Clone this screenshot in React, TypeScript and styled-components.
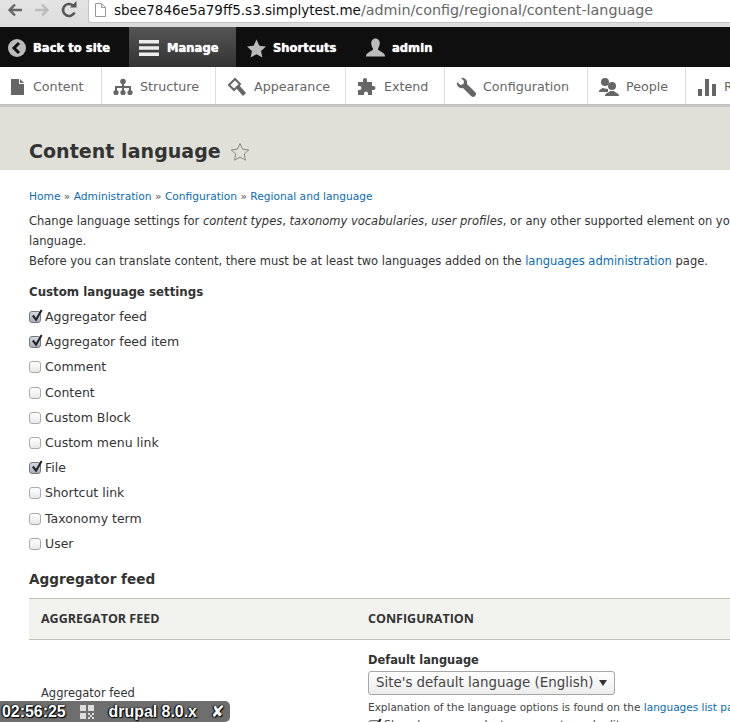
import React from "react";
import styled, { createGlobalStyle } from "styled-components";

const Global = createGlobalStyle`
  html, body { margin: 0; padding: 0; background: #fff; }
  body { width: 730px; height: 722px; overflow: hidden; position: relative; font-family: "DejaVu Sans", "Liberation Sans", sans-serif; font-size: 12px; color: #333; }
  * { box-sizing: border-box; }
`;

const Page = styled.div`width: 730px; height: 722px; overflow: hidden; display: flex; flex-direction: column;`;

const BrowserBar = styled.div`
  height: 27px; flex: none; display: flex; align-items: flex-start;
  background: linear-gradient(#e4e4e4, #dcdcdc);
  padding-left: 6px;
`;
const NavIcon = styled.svg`width: 18px; height: 18px; margin: 1px 9px 0 0; flex: none;`;
const UrlBox = styled.div`
  flex: 1; height: 23px; margin-left: 1px; background: #fff; border: 1px solid #c4c4c4; border-top: 0; border-right: 0;
  border-radius: 0 0 0 3px; display: flex; align-items: center; padding: 0 0 2px 6px; font-size: 14.3px; color: #666; white-space: nowrap;
`;
const UrlHost = styled.span`color: #111; margin-left: 8px; font-size: 13.5px;`;

const AdminBar = styled.div`height: 40px; flex: none; background: #0f0f0f; display: flex; align-items: stretch; color: #fff;`;
const BarItem = styled.div<{ $w: number; $pad?: number; $gap?: number; $active?: boolean }>`
  width: ${p => p.$w}px; flex: none; display: flex; align-items: center; gap: ${p => p.$gap ?? 7}px; padding: 2px 0 0 ${p => p.$pad ?? 8}px;
  font-weight: 700; font-size: 11.6px; color: #fff; text-shadow: 0 0 1px #fff;
  background: ${p => (p.$active ? "linear-gradient(#555, #333)" : "transparent")};
`;

const Tray = styled.div`height: 40px; flex: none; display: flex; background: #fff; border-bottom: 3px solid #c4c4c4; overflow: hidden;`;
const TrayItem = styled.div<{ $w: number }>`
  width: ${p => p.$w}px; flex: none; display: flex; align-items: center; gap: 7px; padding: 2px 0 0 11px;
  border-right: 1px solid #ddd; color: #666; font-size: 12.7px; white-space: nowrap;
`;

const Header = styled.div`height: 63px; flex: none; background: #e0e0d8; display: flex; align-items: flex-end; gap: 9px; padding: 0 0 5px 29px;`;
const Title = styled.h1`margin: 0; font-size: 19px; line-height: 28px; font-weight: 700; color: #333; letter-spacing: 0.05px;`;
const PageStar = styled.svg`flex: none; display: block; width: 20px; height: 20px; margin-bottom: 3px;`;

const Content = styled.div`padding: 20px 0 0 29px; flex: 1; position: relative; white-space: nowrap;`;
const Crumbs = styled.div`font-size: 10.65px; line-height: 14px; color: #555; margin-bottom: 7px;`;
const A = styled.span`color: #0b6bb5;`;
const Para = styled.div`font-size: 11.5px; line-height: 20px; color: #333;`;
const FieldTitle = styled.div`font-weight: 700; font-size: 11.8px; line-height: 16px; margin: 13px 0 9px;`;
const CheckRow = styled.label`height: 25.2px; display: flex; align-items: flex-start; gap: 4px; font-size: 12.5px; line-height: 16px; color: #333;`;
const Box = styled.span<{ $on?: boolean }>`
  width: 12px; height: 12px; margin-top: 2px; border-radius: 3px; flex: none; position: relative;
  border: 1px solid ${p => (p.$on ? "#777" : "#aaa")};
  background: ${p => (p.$on ? "linear-gradient(#d4d8e4,#a9afc2)" : "linear-gradient(#fff,#e8e8e8)")};
`;
const Tick = styled.svg`position: absolute; left: 0; top: -4px; width: 14px; height: 15px;`;
const Section = styled.h2`font-size: 13.6px; line-height: 18px; font-weight: 700; margin: 9px 0 10px;`;
const THead = styled.div`height: 42px; display: flex; align-items: center; background: #f2f2ee; border-top: 1px solid #bfbfba; border-bottom: 1px solid #bfbfba; font-family: "Open Sans", sans-serif; font-weight: 700; font-size: 12.5px; color: #333;`;
const Cell1 = styled.div`width: 327px; padding-left: 12px; flex: none;`;
const Cell2 = styled.div`flex: 1; padding-left: 12px;`;
const TRow = styled.div`display: flex; align-items: flex-start;`;
const RowLabel = styled(Cell1)`padding-top: 46px; font-size: 11.5px; line-height: 14px;`;
const RowBody = styled(Cell2)`padding-top: 13px;`;
const Label = styled.div`font-weight: 700; font-size: 11.4px; line-height: 14px; margin-bottom: 4px;`;
const Select = styled.div`
  width: 247px; height: 24px; border: 1px solid #a6a6a6; border-radius: 3px; background: linear-gradient(#fff,#ececec);
  display: flex; align-items: center; justify-content: space-between; padding: 0 7px 0 7px; font-size: 13.4px; color: #444; margin-bottom: 5px;
`;
const Arrow = styled.span`width: 0; height: 0; border-left: 4px solid transparent; border-right: 4px solid transparent; border-top: 6px solid #333;`;
const Help = styled.div`font-size: 10.5px; line-height: 14px; color: #444;`;
const SubCheck = styled.div`display: flex; gap: 4px; align-items: flex-start; margin-top: 4px; font-size: 11px; line-height: 14px; color: #444;`;

const Timer = styled.div`
  position: absolute; left: 0; bottom: 0; width: 230px; height: 21px; background: #6e6e6e; border-radius: 0 5px 5px 0;
  display: flex; align-items: center; color: #fff; font-family: "Liberation Sans", sans-serif; font-weight: 700; font-size: 15.9px;
  text-shadow: 0 0 2px #000, 1px 1px 1px #000, -1px 0 1px #000; white-space: nowrap; padding-left: 2px;
`;
const Qr = styled.svg`width: 14px; height: 14px; margin: 0 15px 0 14px; flex: none;`;
const Close = styled.span`margin-left: 14px; font-family: "DejaVu Sans", sans-serif; font-size: 16px;`;

const Ico = styled.svg`flex: none; display: block;`;

const G = "#666";
const Gl = "#bbb";

const trayItems: { w: number; label: string; icon: React.ReactNode }[] = [
  { w: 102, label: "Content", icon: <Ico width="15" height="18" viewBox="0 0 15 18"><path fill={G} d="M0 1h8v5h5v11H0z" /><path fill={G} d="M9 1l4 4H9z" /></Ico> },
  { w: 114, label: "Structure", icon: <Ico width="20" height="18" viewBox="0 0 20 18"><circle cx="10" cy="3.500" r="2.800" fill={G} /><circle cx="3" cy="14.500" r="2.600" fill={G} /><circle cx="10" cy="14.500" r="2.600" fill={G} /><circle cx="17" cy="14.500" r="2.600" fill={G} /><path stroke={G} strokeWidth="2" fill="none" d="M10 5v9M3 13V9h14v4" /></Ico> },
  { w: 130, label: "Appearance", icon: <Ico width="20" height="20" viewBox="0 0 20 20"><path fill="none" stroke={G} strokeWidth="2" d="M2 8l6-6 5 5-6 6z" /><path fill={G} d="M9 11l3-3 7 8-3 3z" /></Ico> },
  { w: 99, label: "Extend", icon: <Ico width="20" height="19" viewBox="0 0 20 19"><path fill={G} d="M1 5h5V3a2 2 0 1 1 4 0v2h5v4h1.500a2 2 0 1 1 0 4H15v5h-4v-1.500a2 2 0 1 0-4 0V18H1v-5h1.500a2 2 0 1 0 0-4H1z" /></Ico> },
  { w: 143, label: "Configuration", icon: <Ico width="20" height="20" viewBox="0 0 20 20"><path fill={G} d="M5 1a5 5 0 0 1 6 6l8 8a2.500 2.500 0 0 1-4 4l-8-8a5 5 0 0 1-6-6l3.500 3 3-1 .5-3z" /></Ico> },
  { w: 98, label: "People", icon: <Ico width="20" height="20" viewBox="0 0 20 20"><circle cx="6" cy="5" r="4" fill={G} /><path fill={G} d="M0 15c0-3 3-3 3-4l6 1v3H3z" /><circle cx="13" cy="9" r="4" fill={G} /><path fill={G} d="M6 19c0-3 3-3 5-5h4c2 2 5 2 5 5z" /></Ico> },
  { w: 60, label: "Reports", icon: <Ico width="20" height="20" viewBox="0 0 20 20"><path fill={G} d="M1 12h4v7H1zM8 2h4v17H8zM15 7h4v12h-4z" /></Ico> },
];

const checks: [string, boolean][] = [
  ["Aggregator feed", true], ["Aggregator feed item", true], ["Comment", false], ["Content", false],
  ["Custom Block", false], ["Custom menu link", false], ["File", true], ["Shortcut link", false],
  ["Taxonomy term", false], ["User", false],
];

const TickMark = () => (
  <Tick viewBox="0 0 15 16"><path fill="none" stroke="#222" strokeWidth="2.200" d="M3 8l3.500 4.500L12.500 2" /></Tick>
);

export default function App() {
  return (
    <Page>
      <Global />
      <BrowserBar>
        <NavIcon viewBox="0 0 18 18"><path fill="none" stroke="#666" strokeWidth="2.400" d="M16 9H4M9 3.500L3.500 9 9 14.500" /></NavIcon>
        <NavIcon viewBox="0 0 18 18"><path fill="none" stroke="#bbb" strokeWidth="2.400" d="M2 9h12M9 3.500L14.500 9 9 14.500" /></NavIcon>
        <NavIcon viewBox="0 0 18 18"><path fill="none" stroke="#555" strokeWidth="2.600" d="M14.500 11.500A6 6 0 1 1 13 4.500" /><path fill="#555" d="M10 6.500h6.500V0z" /></NavIcon>
        <UrlBox>
          <svg width="11" height="14" viewBox="0 0 11 14"><path fill="#fff" stroke="#999" d="M.5.500h6l4 4v9H.5z" /><path fill="none" stroke="#999" d="M6.500.500v4h4" /></svg>
          <UrlHost>sbee7846e5a79ff5.s3.simplytest.me</UrlHost>/admin/config/regional/content-language
        </UrlBox>
      </BrowserBar>
      <AdminBar>
        <BarItem $w={129}>
          <Ico width="18" height="18" viewBox="0 0 18 18"><circle cx="9" cy="9" r="9" fill={Gl} /><path fill="none" stroke="#0f0f0f" strokeWidth="3" d="M11 4L6 9l5 5" /></Ico>
          Back to site
        </BarItem>
        <BarItem $w={107} $pad={10} $gap={8} $active>
          <Ico width="20" height="18" viewBox="0 0 20 18"><path fill="#eee" d="M0 1h20v3.500H0zM0 7.200h20v3.500H0zM0 13.500h20V17H0z" /></Ico>
          Manage
        </BarItem>
        <BarItem $w={120} $pad={11} $gap={7}>
          <Ico width="19" height="19" viewBox="0 0 20 19"><path fill={Gl} d="M10 0l3 6.500 7 .8-5.200 4.700L16.200 19 10 15.500 3.800 19l1.400-7L0 7.300l7-.8z" /></Ico>
          Shortcuts
        </BarItem>
        <BarItem $w={120} $pad={10} $gap={7}>
          <Ico width="19" height="20" viewBox="0 0 20 20"><path fill={Gl} d="M10 0c3 0 4.500 2.500 4.500 5S13 10 12.500 11c0 2 6.500 3 7.500 7v1H0v-1c1-4 7.500-5 7.500-7C7 10 5.500 7.500 5.500 5S7 0 10 0z" /></Ico>
          admin
        </BarItem>
      </AdminBar>
      <Tray>
        {trayItems.map(t => (
          <TrayItem key={t.label} $w={t.w}>{t.icon}{t.label}</TrayItem>
        ))}
      </Tray>
      <Header>
        <Title>Content language</Title>
        <PageStar viewBox="0 0 20 20"><path fill="none" stroke="#8a8a7a" d="M10 1.500l2.600 5.700 6.200.7-4.600 4.200 1.300 6.100L10 15.100l-5.500 3.100 1.300-6.100L1.200 7.900l6.200-.7z" /></PageStar>
      </Header>
      <Content>
        <Crumbs><A>Home</A> » <A>Administration</A> » <A>Configuration</A> » <A>Regional and language</A></Crumbs>
        <Para>Change language settings for <em>content types</em>, <em>taxonomy vocabularies</em>, <em>user profiles</em>, or any other supported element on your site. By default, language settings<br />language.</Para>
        <Para>Before you can translate content, there must be at least two languages added on the <A>languages administration</A> page.</Para>
        <FieldTitle>Custom language settings</FieldTitle>
        {checks.map(([l, on]) => (
          <CheckRow key={l}>
            <Box $on={on}>{on && <TickMark />}</Box>
            {l}
          </CheckRow>
        ))}
        <Section>Aggregator feed</Section>
        <div>
          <THead><Cell1>AGGREGATOR FEED</Cell1><Cell2>CONFIGURATION</Cell2></THead>
          <TRow>
            <RowLabel>Aggregator feed</RowLabel>
            <RowBody>
              <Label>Default language</Label>
              <Select>Site's default language (English)<Arrow /></Select>
              <Help>Explanation of the language options is found on the <A>languages list page</A>.</Help>
              <SubCheck><Box $on><TickMark /></Box>Show language selector on create and edit pages</SubCheck>
            </RowBody>
          </TRow>
        </div>
      </Content>
      <Timer>
        02:56:25
        <Qr viewBox="0 0 14 14"><path fill="#ddd" d="M0 0h6v6H0zM8 0h6v6H8zM0 8h6v6H0zM8 8h2v2H8zM12 8h2v2h-2zM10 10h2v2h-2zM8 12h2v2H8zM12 12h2v2h-2z" /></Qr>
        drupal 8.0.x
        <Close>✘</Close>
      </Timer>
    </Page>
  );
}
